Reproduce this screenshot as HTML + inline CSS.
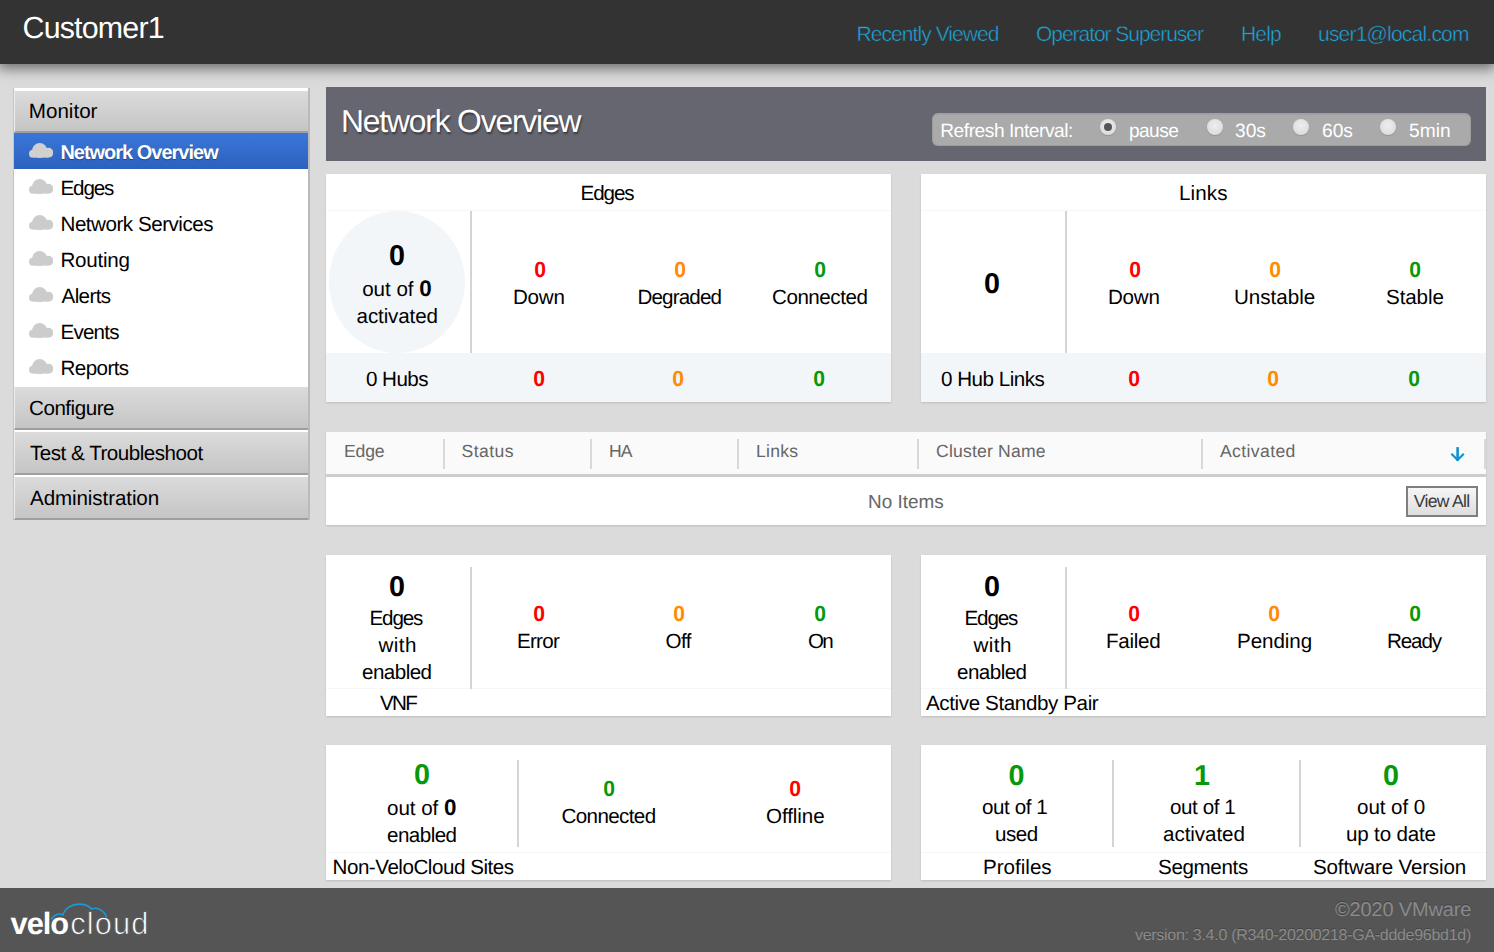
<!DOCTYPE html>
<html lang="en">
<head>
<meta charset="utf-8">
<title>Network Overview</title>
<style>
*{box-sizing:border-box;margin:0;padding:0}
html,body{width:1494px;height:952px;overflow:hidden}
body{background:#dbdbdb;font-family:"Liberation Sans",sans-serif;color:#000;position:relative;text-rendering:geometricPrecision}
.abs{position:absolute}
.t{position:absolute;white-space:nowrap;line-height:1}
/* header */
#hdr{left:0;top:0;width:1494px;height:64px;background:#333;box-shadow:0 2px 13px 2px rgba(0,0,0,.55)}
/* sidebar */
#side{left:13px;top:88px;width:297px;height:432px;background:#fff;border-left:1px solid #c4c4c4;border-right:2px solid #bababa}
.sh{left:0;width:294px;height:45px;background:linear-gradient(#dbdbdb,#c5c5c5);border-top:2px solid #fff;border-left:1px solid #eee;border-bottom:2px solid #9f9f9f}
.si{left:0;width:294px;height:36px}
.si svg{position:absolute;left:14.9px;top:10.300px}
.si.sel{background:linear-gradient(#3a76d8,#2c62be)}
/* panel */
#ph{left:326px;top:87px;width:1160px;height:74px;background:#666671}
#rf{left:932px;top:113px;width:539px;height:33px;background:#aaa;border:1px solid #9c9c9f;border-top:2px solid #a0a0a2;border-radius:6px}
.rad{width:16px;height:16px;border-radius:50%;background:radial-gradient(circle at 50% 40%,#eee,#d6d6d6);top:119px;box-shadow:0 1px 1px rgba(0,0,0,.15)}
.rad.on::after{content:"";position:absolute;left:4px;top:4px;width:8px;height:8px;border-radius:50%;background:#555}
.card{background:#fff;box-shadow:0 1px 2px rgba(0,0,0,.14)}
.vd{width:2px;background:#d4d4d4}
.hdiv{height:1px;background:#f7f7f7}
.foot{background:#f3f6f9}
.sep{top:439px;width:2px;height:30px;background:#d9d9d9}
#ft{left:0;top:888px;width:1494px;height:64px;background:#555}
</style>
</head>
<body>
<!-- HEADER -->
<div id="hdr" class="abs"></div>

<!-- SIDEBAR -->
<div id="side" class="abs">
  <div class="abs sh" style="top:0;border-top-width:3px"></div>
  <div class="abs si sel" style="top:45px"><svg width="24.3" height="14.6" viewBox="0 0 24.3 14.6"><g fill="#d0d0d0"><circle cx="10.7" cy="7.5" r="7.5"/><circle cx="19.4" cy="9.700" r="4.900"/><circle cx="3.900" cy="10.700" r="3.900"/><rect x="3.900" y="7.5" width="15.5" height="7.100"/></g></svg></div>
  <div class="abs si" style="top:81px"><svg width="24.3" height="14.6" viewBox="0 0 24.3 14.6"><g fill="#cccccc"><circle cx="10.7" cy="7.5" r="7.5"/><circle cx="19.4" cy="9.700" r="4.900"/><circle cx="3.900" cy="10.700" r="3.900"/><rect x="3.900" y="7.5" width="15.5" height="7.100"/></g></svg></div>
  <div class="abs si" style="top:117px"><svg width="24.3" height="14.6" viewBox="0 0 24.3 14.6"><g fill="#cccccc"><circle cx="10.7" cy="7.5" r="7.5"/><circle cx="19.4" cy="9.700" r="4.900"/><circle cx="3.900" cy="10.700" r="3.900"/><rect x="3.900" y="7.5" width="15.5" height="7.100"/></g></svg></div>
  <div class="abs si" style="top:153px"><svg width="24.3" height="14.6" viewBox="0 0 24.3 14.6"><g fill="#cccccc"><circle cx="10.7" cy="7.5" r="7.5"/><circle cx="19.4" cy="9.700" r="4.900"/><circle cx="3.900" cy="10.700" r="3.900"/><rect x="3.900" y="7.5" width="15.5" height="7.100"/></g></svg></div>
  <div class="abs si" style="top:189px"><svg width="24.3" height="14.6" viewBox="0 0 24.3 14.6"><g fill="#cccccc"><circle cx="10.7" cy="7.5" r="7.5"/><circle cx="19.4" cy="9.700" r="4.900"/><circle cx="3.900" cy="10.700" r="3.900"/><rect x="3.900" y="7.5" width="15.5" height="7.100"/></g></svg></div>
  <div class="abs si" style="top:225px"><svg width="24.3" height="14.6" viewBox="0 0 24.3 14.6"><g fill="#cccccc"><circle cx="10.7" cy="7.5" r="7.5"/><circle cx="19.4" cy="9.700" r="4.900"/><circle cx="3.900" cy="10.700" r="3.900"/><rect x="3.900" y="7.5" width="15.5" height="7.100"/></g></svg></div>
  <div class="abs si" style="top:261px"><svg width="24.3" height="14.6" viewBox="0 0 24.3 14.6"><g fill="#cccccc"><circle cx="10.7" cy="7.5" r="7.5"/><circle cx="19.4" cy="9.700" r="4.900"/><circle cx="3.900" cy="10.700" r="3.900"/><rect x="3.900" y="7.5" width="15.5" height="7.100"/></g></svg></div>
  <div class="abs sh" style="top:297px"></div>
  <div class="abs sh" style="top:342px"></div>
  <div class="abs sh" style="top:387px"></div>
</div>

<!-- PANEL HEADER -->
<div id="ph" class="abs"></div>
<div id="rf" class="abs"></div>
<div class="abs rad on" style="left:1100px"></div>
<div class="abs rad" style="left:1207px"></div>
<div class="abs rad" style="left:1293px"></div>
<div class="abs rad" style="left:1380px"></div>

<!-- EDGES CARD -->
<div class="abs card" style="left:326px;top:174px;width:565px;height:228px"></div>
<div class="abs hdiv" style="left:326px;top:210px;width:565px"></div>
<div class="abs foot" style="left:326px;top:353px;width:565px;height:49px"></div>
<div class="abs" style="left:329px;top:211px;width:136px;height:142px;border-radius:50%;background:#f3f6f9"></div>
<div class="abs vd" style="left:470px;top:211px;height:142px"></div>

<!-- LINKS CARD -->
<div class="abs card" style="left:921px;top:174px;width:565px;height:228px"></div>
<div class="abs hdiv" style="left:921px;top:210px;width:565px"></div>
<div class="abs foot" style="left:921px;top:353px;width:565px;height:49px"></div>
<div class="abs vd" style="left:1065px;top:211px;height:142px"></div>

<!-- TABLE -->
<div class="abs card" style="left:326px;top:432px;width:1160px;height:93px"></div>
<div class="abs" style="left:326px;top:432px;width:1160px;height:45px;background:#fafafa;border-bottom:3px solid #cdcdcd"></div>
<div class="abs sep" style="left:443px"></div>
<div class="abs sep" style="left:590px"></div>
<div class="abs sep" style="left:737px"></div>
<div class="abs sep" style="left:917px"></div>
<div class="abs sep" style="left:1201px"></div>
<div class="abs sep" style="left:1484px"></div>
<svg class="abs" style="left:1450px;top:446px" width="16" height="17" viewBox="0 0 16 17"><g fill="none" stroke="#0f90d1"><path d="M7.600 1.100V14.800" stroke-width="2.600"/><path d="M1.400 7.800L7.600 14L13.800 7.800" stroke-width="2.200" stroke-linejoin="miter"/></g></svg>
<div class="abs" style="left:1406px;top:486px;width:72px;height:31px;background:linear-gradient(#f6f6f6,#dedede);border:2px solid #7f7f7f"></div>

<!-- VNF CARD -->
<div class="abs card" style="left:326px;top:555px;width:565px;height:161px"></div>
<div class="abs hdiv" style="left:326px;top:688px;width:565px"></div>
<div class="abs vd" style="left:470px;top:567px;height:122px"></div>

<!-- ASP CARD -->
<div class="abs card" style="left:921px;top:555px;width:565px;height:161px"></div>
<div class="abs hdiv" style="left:921px;top:688px;width:565px"></div>
<div class="abs vd" style="left:1065px;top:567px;height:122px"></div>

<!-- NVS CARD -->
<div class="abs card" style="left:326px;top:745px;width:565px;height:135px"></div>
<div class="abs hdiv" style="left:326px;top:852px;width:565px"></div>
<div class="abs vd" style="left:517px;top:760px;height:87px"></div>

<!-- PROFILES CARD -->
<div class="abs card" style="left:921px;top:745px;width:565px;height:135px"></div>
<div class="abs hdiv" style="left:921px;top:852px;width:565px"></div>
<div class="abs vd" style="left:1112px;top:760px;height:87px"></div>
<div class="abs vd" style="left:1299px;top:760px;height:87px"></div>

<!-- FOOTER -->
<div id="ft" class="abs"></div>
<svg class="abs" style="left:0;top:888px" width="200" height="64" viewBox="0 0 200 64">
  <path d="M51.500 30.800C53.500 27.500 58.500 24.500 63 26.800C65 20 72 16.100 79 16.100C84.500 16.100 89 18 91.300 20.900C96 19 104 21.500 106.400 28.800" fill="none" stroke="#1a9ad7" stroke-width="1.600" stroke-linecap="round"/>
  <text x="10.500" y="45.500" font-family="Liberation Sans, sans-serif" font-size="30.800" fill="#fff"><tspan font-weight="bold" letter-spacing="-1">velo</tspan><tspan dx="2.200" letter-spacing="1.100" stroke="#555" stroke-width="0.750">cloud</tspan></text>
</svg>

<!-- TEXT -->
<div class="t" style="left:22.5px;top:12.7px;font-size:30.4px;letter-spacing:-0.81px;color:#fff;">Customer1</div>
<div class="t" style="left:856.5px;top:23.6px;font-size:21px;letter-spacing:-0.93px;color:#1ea5db;-webkit-text-stroke:0.45px #333;">Recently Viewed</div>
<div class="t" style="left:1036.0px;top:23.6px;font-size:21px;letter-spacing:-1.04px;color:#1ea5db;-webkit-text-stroke:0.45px #333;">Operator Superuser</div>
<div class="t" style="left:1241.0px;top:23.6px;font-size:21px;letter-spacing:-0.83px;color:#1ea5db;-webkit-text-stroke:0.45px #333;">Help</div>
<div class="t" style="left:1318.0px;top:23.6px;font-size:21px;letter-spacing:-0.79px;color:#1ea5db;-webkit-text-stroke:0.45px #333;">user1@local.com</div>
<div class="t" style="left:28.8px;top:102.0px;font-size:20.6px;">Monitor</div>
<div class="t" style="left:60.4px;top:144.2px;font-size:19.9px;letter-spacing:-0.95px;color:#fff;font-weight:bold;text-shadow:0 1px 1px rgba(0,0,0,.4);">Network Overview</div>
<div class="t" style="left:60.5px;top:179.0px;font-size:20.6px;letter-spacing:-1.12px;">Edges</div>
<div class="t" style="left:60.5px;top:215.0px;font-size:20.6px;letter-spacing:-0.48px;">Network Services</div>
<div class="t" style="left:60.5px;top:251.0px;font-size:20.6px;letter-spacing:-0.25px;">Routing</div>
<div class="t" style="left:61.5px;top:287.0px;font-size:20.6px;letter-spacing:-0.60px;">Alerts</div>
<div class="t" style="left:60.5px;top:323.0px;font-size:20.6px;letter-spacing:-0.80px;">Events</div>
<div class="t" style="left:60.5px;top:359.0px;font-size:20.6px;letter-spacing:-0.58px;">Reports</div>
<div class="t" style="left:29.0px;top:399.0px;font-size:20.6px;letter-spacing:-0.47px;">Configure</div>
<div class="t" style="left:30.0px;top:444.0px;font-size:20.6px;letter-spacing:-0.49px;">Test &amp; Troubleshoot</div>
<div class="t" style="left:30.0px;top:489.0px;font-size:20.6px;letter-spacing:-0.10px;">Administration</div>
<div class="t" style="left:341.0px;top:106.1px;font-size:31.8px;letter-spacing:-1.17px;color:#fff;text-shadow:1px 2px 2px rgba(0,0,0,.45);">Network Overview</div>
<div class="t" style="left:940.2px;top:121.9px;font-size:19.2px;letter-spacing:-0.47px;color:#fff;">Refresh Interval:</div>
<div class="t" style="left:1129.0px;top:121.9px;font-size:19.2px;letter-spacing:-0.62px;color:#fff;">pause</div>
<div class="t" style="left:1235.0px;top:121.9px;font-size:19.2px;color:#fff;">30s</div>
<div class="t" style="left:1322.0px;top:121.9px;font-size:19.2px;color:#fff;">60s</div>
<div class="t" style="left:1409.0px;top:121.9px;font-size:19.2px;color:#fff;">5min</div>
<div class="t" style="left:580.5px;top:184.0px;font-size:20.6px;letter-spacing:-1.06px;">Edges</div>
<div class="t" style="left:533.6px;top:258.8px;font-size:22px;color:#f00;font-weight:bold;transform:scaleX(.96);">0</div>
<div class="t" style="left:673.6px;top:258.8px;font-size:22px;color:#ff8c00;font-weight:bold;transform:scaleX(.96);">0</div>
<div class="t" style="left:814.1px;top:258.8px;font-size:22px;color:#089808;font-weight:bold;transform:scaleX(.96);">0</div>
<div class="t" style="left:513.0px;top:288.0px;font-size:20.6px;letter-spacing:-0.25px;">Down</div>
<div class="t" style="left:637.5px;top:288.0px;font-size:20.6px;letter-spacing:-0.86px;">Degraded</div>
<div class="t" style="left:772.0px;top:288.0px;font-size:20.6px;letter-spacing:-0.47px;">Connected</div>
<div class="t" style="left:532.6px;top:367.8px;font-size:22px;color:#f00;font-weight:bold;transform:scaleX(.96);">0</div>
<div class="t" style="left:672.1px;top:367.8px;font-size:22px;color:#ff8c00;font-weight:bold;transform:scaleX(.96);">0</div>
<div class="t" style="left:813.1px;top:367.8px;font-size:22px;color:#089808;font-weight:bold;transform:scaleX(.96);">0</div>
<div class="t" style="left:1179.0px;top:184.0px;font-size:20.6px;letter-spacing:0.12px;">Links</div>
<div class="t" style="left:1128.6px;top:258.8px;font-size:22px;color:#f00;font-weight:bold;transform:scaleX(.96);">0</div>
<div class="t" style="left:1268.6px;top:258.8px;font-size:22px;color:#ff8c00;font-weight:bold;transform:scaleX(.96);">0</div>
<div class="t" style="left:1409.1px;top:258.8px;font-size:22px;color:#089808;font-weight:bold;transform:scaleX(.96);">0</div>
<div class="t" style="left:1108.0px;top:288.0px;font-size:20.6px;letter-spacing:-0.25px;">Down</div>
<div class="t" style="left:1234.0px;top:288.0px;font-size:20.6px;">Unstable</div>
<div class="t" style="left:1386.0px;top:288.0px;font-size:20.6px;letter-spacing:-0.10px;">Stable</div>
<div class="t" style="left:1127.6px;top:367.8px;font-size:22px;color:#f00;font-weight:bold;transform:scaleX(.96);">0</div>
<div class="t" style="left:1267.1px;top:367.8px;font-size:22px;color:#ff8c00;font-weight:bold;transform:scaleX(.96);">0</div>
<div class="t" style="left:1408.1px;top:367.8px;font-size:22px;color:#089808;font-weight:bold;transform:scaleX(.96);">0</div>
<div class="t" style="left:389.0px;top:241.5px;font-size:28.7px;font-weight:bold;">0</div>
<div class="t" style="left:362.2px;top:277.6px;font-size:20.6px;letter-spacing:-0.04px;">out of <b style="font-size:22.4px">0</b></div>
<div class="t" style="left:356.6px;top:307.0px;font-size:20.6px;letter-spacing:-0.13px;">activated</div>
<div class="t" style="left:366.0px;top:370.2px;font-size:20.6px;letter-spacing:-0.55px;">0 Hubs</div>
<div class="t" style="left:984.0px;top:269.9px;font-size:28.7px;font-weight:bold;">0</div>
<div class="t" style="left:941.0px;top:370.2px;font-size:20.6px;letter-spacing:-0.50px;">0 Hub Links</div>
<div class="t" style="left:344.0px;top:442.9px;font-size:17.6px;letter-spacing:-0.17px;color:#666;">Edge</div>
<div class="t" style="left:461.6px;top:442.9px;font-size:17.6px;letter-spacing:0.40px;color:#666;">Status</div>
<div class="t" style="left:609.0px;top:442.9px;font-size:17.6px;letter-spacing:-1.00px;color:#666;">HA</div>
<div class="t" style="left:756.0px;top:442.9px;font-size:17.6px;letter-spacing:0.25px;color:#666;">Links</div>
<div class="t" style="left:936.0px;top:442.9px;font-size:17.6px;letter-spacing:0.18px;color:#666;">Cluster Name</div>
<div class="t" style="left:1220.0px;top:442.9px;font-size:17.6px;letter-spacing:0.38px;color:#666;">Activated</div>
<div class="t" style="left:868.0px;top:493.8px;font-size:18.9px;color:#666;">No Items</div>
<div class="t" style="left:1413.8px;top:492.9px;font-size:17.6px;letter-spacing:-0.71px;color:#3a3a3a;">View All</div>
<div class="t" style="left:389.0px;top:573.1px;font-size:28.7px;font-weight:bold;">0</div>
<div class="t" style="left:369.5px;top:609.0px;font-size:20.6px;letter-spacing:-1.12px;">Edges</div>
<div class="t" style="left:378.5px;top:636.0px;font-size:20.6px;letter-spacing:0.42px;">with</div>
<div class="t" style="left:362.0px;top:663.0px;font-size:20.6px;letter-spacing:-0.54px;">enabled</div>
<div class="t" style="left:533.1px;top:602.8px;font-size:22px;color:#f00;font-weight:bold;transform:scaleX(.96);">0</div>
<div class="t" style="left:673.1px;top:602.8px;font-size:22px;color:#ff8c00;font-weight:bold;transform:scaleX(.96);">0</div>
<div class="t" style="left:813.6px;top:602.8px;font-size:22px;color:#089808;font-weight:bold;transform:scaleX(.96);">0</div>
<div class="t" style="left:984.0px;top:573.1px;font-size:28.7px;font-weight:bold;">0</div>
<div class="t" style="left:964.5px;top:609.0px;font-size:20.6px;letter-spacing:-1.12px;">Edges</div>
<div class="t" style="left:973.5px;top:636.0px;font-size:20.6px;letter-spacing:0.42px;">with</div>
<div class="t" style="left:957.0px;top:663.0px;font-size:20.6px;letter-spacing:-0.54px;">enabled</div>
<div class="t" style="left:1128.1px;top:602.8px;font-size:22px;color:#f00;font-weight:bold;transform:scaleX(.96);">0</div>
<div class="t" style="left:1268.1px;top:602.8px;font-size:22px;color:#ff8c00;font-weight:bold;transform:scaleX(.96);">0</div>
<div class="t" style="left:1408.6px;top:602.8px;font-size:22px;color:#089808;font-weight:bold;transform:scaleX(.96);">0</div>
<div class="t" style="left:380.0px;top:694.0px;font-size:20.6px;letter-spacing:-1.70px;">VNF</div>
<div class="t" style="left:517.0px;top:632.0px;font-size:20.6px;letter-spacing:-0.75px;">Error</div>
<div class="t" style="left:665.5px;top:632.0px;font-size:20.6px;letter-spacing:-0.62px;">Off</div>
<div class="t" style="left:808.0px;top:632.0px;font-size:20.6px;letter-spacing:-1.70px;">On</div>
<div class="t" style="left:926.0px;top:694.0px;font-size:20.6px;letter-spacing:-0.39px;">Active Standby Pair</div>
<div class="t" style="left:1106.0px;top:632.0px;font-size:20.6px;letter-spacing:-0.30px;">Failed</div>
<div class="t" style="left:1237.0px;top:632.0px;font-size:20.6px;letter-spacing:-0.08px;">Pending</div>
<div class="t" style="left:1387.0px;top:632.0px;font-size:20.6px;letter-spacing:-1.12px;">Ready</div>
<div class="t" style="left:413.9px;top:760.9px;font-size:28.7px;color:#089808;font-weight:bold;">0</div>
<div class="t" style="left:387.0px;top:796.8px;font-size:20.6px;letter-spacing:-0.04px;">out of <b style="font-size:22.4px">0</b></div>
<div class="t" style="left:387.0px;top:826.0px;font-size:20.6px;letter-spacing:-0.54px;">enabled</div>
<div class="t" style="left:332.5px;top:858.0px;font-size:20.6px;letter-spacing:-0.47px;">Non-VeloCloud Sites</div>
<div class="t" style="left:603.1px;top:777.8px;font-size:22px;color:#089808;font-weight:bold;transform:scaleX(.96);">0</div>
<div class="t" style="left:789.1px;top:777.8px;font-size:22px;color:#f00;font-weight:bold;transform:scaleX(.96);">0</div>
<div class="t" style="left:561.5px;top:807.0px;font-size:20.6px;letter-spacing:-0.62px;">Connected</div>
<div class="t" style="left:766.0px;top:807.0px;font-size:20.6px;letter-spacing:-0.08px;">Offline</div>
<div class="t" style="left:1008.5px;top:761.9px;font-size:28.7px;color:#089808;font-weight:bold;">0</div>
<div class="t" style="left:1194.0px;top:761.9px;font-size:28.7px;color:#089808;font-weight:bold;">1</div>
<div class="t" style="left:1383.0px;top:761.9px;font-size:28.7px;color:#089808;font-weight:bold;">0</div>
<div class="t" style="left:982.0px;top:797.6px;font-size:20.6px;letter-spacing:-0.43px;">out of 1</div>
<div class="t" style="left:1170.0px;top:797.6px;font-size:20.6px;letter-spacing:-0.43px;">out of 1</div>
<div class="t" style="left:1357.0px;top:797.6px;font-size:20.6px;letter-spacing:-0.07px;">out of 0</div>
<div class="t" style="left:995.0px;top:825.0px;font-size:20.6px;letter-spacing:-0.50px;">used</div>
<div class="t" style="left:1163.0px;top:825.0px;font-size:20.6px;letter-spacing:-0.06px;">activated</div>
<div class="t" style="left:1346.0px;top:825.0px;font-size:20.6px;letter-spacing:-0.17px;">up to date</div>
<div class="t" style="left:983.0px;top:858.0px;font-size:20.6px;">Profiles</div>
<div class="t" style="left:1158.0px;top:858.0px;font-size:20.6px;letter-spacing:-0.36px;">Segments</div>
<div class="t" style="left:1313.0px;top:858.0px;font-size:20.6px;letter-spacing:-0.17px;">Software Version</div>
<div class="t" style="left:1335.0px;top:900.3px;font-size:20px;letter-spacing:-0.16px;color:#8b8b8b;text-shadow:0 -1px 0 rgba(0,0,0,.25);">©2020 VMware</div>
<div class="t" style="left:1135.0px;top:927.5px;font-size:16px;letter-spacing:-0.29px;color:#8b8b8b;text-shadow:0 -1px 0 rgba(0,0,0,.25);">version: 3.4.0 (R340-20200218-GA-ddde96bd1d)</div>
</body>
</html>
